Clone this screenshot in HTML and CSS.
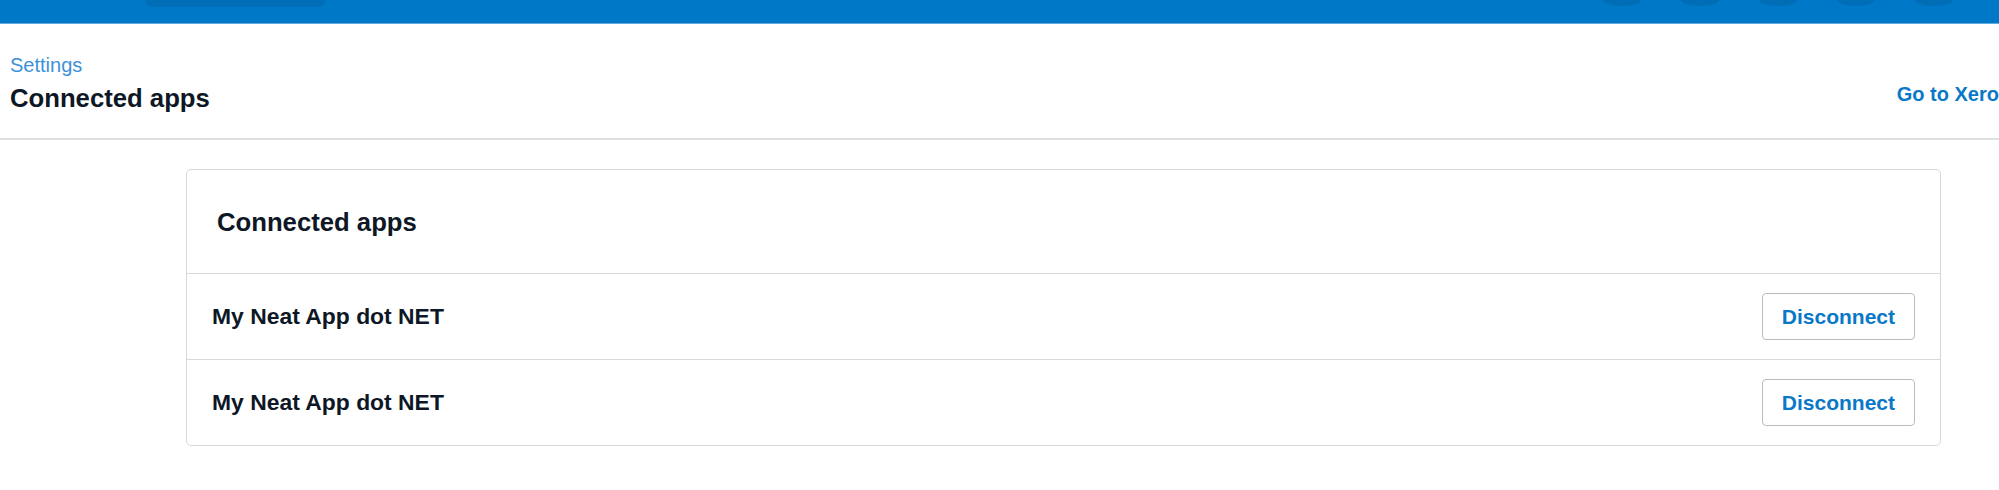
FILE: index.html
```html
<!DOCTYPE html>
<html lang="en">
<head>
  <meta charset="UTF-8">
  <meta name="viewport" content="width=device-width, initial-scale=1.0">
  <title>Connected apps</title>
  <link rel="stylesheet" href="styles.css">
</head>
<body>
  <!-- top navigation bar (scrolled, only the bottom edge is visible) -->
  <div class="topbar">
    <div class="search-pill"></div>
    <div class="nav-icons">
      <span class="nav-dot"></span>
      <span class="nav-dot"></span>
      <span class="nav-dot"></span>
      <span class="nav-dot"></span>
      <span class="nav-dot"></span>
    </div>
  </div>

  <div class="page-header">
    <div class="titles">
      <a class="breadcrumb" href="#">Settings</a>
      <h1>Connected apps</h1>
    </div>
    <a class="go-xero" href="#">Go to Xero</a>
  </div>

  <div class="card">
    <div class="card-header">
      <h2>Connected apps</h2>
    </div>
    <div class="app-row">
      <span class="app-name">My Neat App dot NET</span>
      <button class="disconnect">Disconnect</button>
    </div>
    <div class="app-row">
      <span class="app-name">My Neat App dot NET</span>
      <button class="disconnect">Disconnect</button>
    </div>
  </div>
</body>
</html>
```

FILE: styles.css
```css
body {
  margin: 0;
  font-family: "Liberation Sans", Arial, sans-serif;
  color: #0e1726;
  background-color: #fff;
}
.topbar {
  height: 23px;
  background-color: #0078c8;
  border-bottom: 1px solid #62abe0;
  display: flex;
  justify-content: space-between;
  align-items: flex-start;
}
.search-pill {
  width: 180px;
  height: 7px;
  margin-left: 145px;
  background-color: #006db7;
  border-radius: 0 0 12px 12px;
}
.nav-icons {
  display: flex;
  gap: 40px;
  margin-right: 46px;
}
.nav-dot {
  width: 38px;
  height: 6px;
  background-color: #006db7;
  border-radius: 0 0 50% 50% / 0 0 100% 100%;
}
.page-header {
  display: flex;
  justify-content: space-between;
  align-items: flex-end;
  padding: 29px 0 25px 10px;
  border-bottom: 2px solid #dedfe2;
}
.titles {
  display: flex;
  flex-direction: column;
  gap: 6px;
}
.breadcrumb {
  font-size: 20px;
  line-height: 24px;
  color: #3c91d9;
  text-decoration: none;
}
h1 {
  margin: 0;
  font-size: 25.7px;
  line-height: 30px;
  font-weight: bold;
}
.go-xero {
  font-size: 20px;
  line-height: 24px;
  font-weight: bold;
  color: #0a78c8;
  text-decoration: none;
  padding-bottom: 7px;
}
.card {
  width: 1755px;
  box-sizing: border-box;
  margin: 29px 0 0 186px;
  border: 1px solid #d6d8dc;
  border-radius: 5px;
}
.card-header {
  padding: 37px 30px 36px;
}
h2 {
  margin: 0;
  font-size: 25.7px;
  line-height: 30px;
  font-weight: bold;
}
.app-row {
  display: flex;
  justify-content: space-between;
  align-items: center;
  height: 85px;
  padding: 0 25px;
  border-top: 1px solid #d6d8dc;
}
.app-name {
  font-size: 22.9px;
  font-weight: bold;
}
.disconnect {
  height: 47px;
  padding: 0 19px;
  background-color: #fff;
  border: 1px solid #b9bcc1;
  border-radius: 4px;
  font-family: "Liberation Sans", Arial, sans-serif;
  font-size: 21px;
  font-weight: bold;
  color: #0a78c8;
  cursor: pointer;
}
```
